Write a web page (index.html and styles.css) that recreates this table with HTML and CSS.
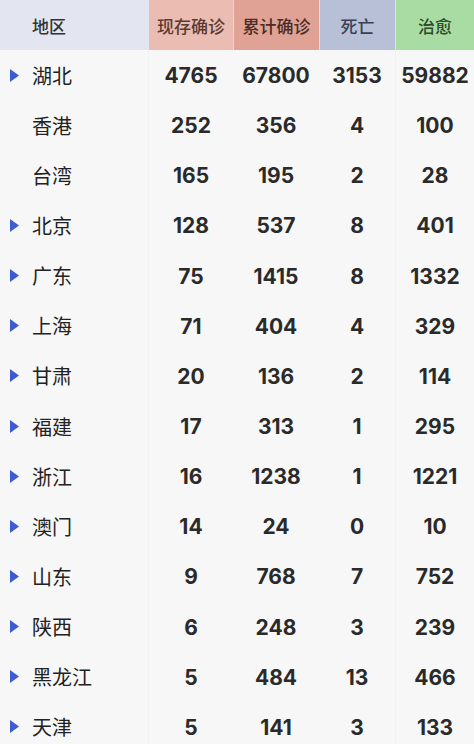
FILE: index.html
```html
<!DOCTYPE html>
<html lang="zh">
<head>
<meta charset="utf-8">
<title>疫情数据</title>
<link rel="stylesheet" href="styles.css">
</head>
<body>
<div class="table">
  <div class="row head">
    <div class="cell h-area">地区</div>
    <div class="cell h-now">现存确诊</div>
    <div class="cell h-total">累计确诊</div>
    <div class="cell h-dead">死亡</div>
    <div class="cell h-heal">治愈</div>
  </div>

  <div class="row"><div class="cell area"><span class="arrow"><svg viewBox="0 0 9 13" width="9" height="13"><path d="M0 0 L9 6.5 L0 13 Z"/></svg></span>湖北</div><div class="cell num">4765</div><div class="cell num">67800</div><div class="cell num c-dead">3153</div><div class="cell num c-heal">59882</div></div>
  <div class="row"><div class="cell area"><span class="arrow"></span>香港</div><div class="cell num">252</div><div class="cell num">356</div><div class="cell num c-dead">4</div><div class="cell num c-heal">100</div></div>
  <div class="row"><div class="cell area"><span class="arrow"></span>台湾</div><div class="cell num">165</div><div class="cell num">195</div><div class="cell num c-dead">2</div><div class="cell num c-heal">28</div></div>
  <div class="row"><div class="cell area"><span class="arrow"><svg viewBox="0 0 9 13" width="9" height="13"><path d="M0 0 L9 6.5 L0 13 Z"/></svg></span>北京</div><div class="cell num">128</div><div class="cell num">537</div><div class="cell num c-dead">8</div><div class="cell num c-heal">401</div></div>
  <div class="row"><div class="cell area"><span class="arrow"><svg viewBox="0 0 9 13" width="9" height="13"><path d="M0 0 L9 6.5 L0 13 Z"/></svg></span>广东</div><div class="cell num">75</div><div class="cell num">1415</div><div class="cell num c-dead">8</div><div class="cell num c-heal">1332</div></div>
  <div class="row"><div class="cell area"><span class="arrow"><svg viewBox="0 0 9 13" width="9" height="13"><path d="M0 0 L9 6.5 L0 13 Z"/></svg></span>上海</div><div class="cell num">71</div><div class="cell num">404</div><div class="cell num c-dead">4</div><div class="cell num c-heal">329</div></div>
  <div class="row"><div class="cell area"><span class="arrow"><svg viewBox="0 0 9 13" width="9" height="13"><path d="M0 0 L9 6.5 L0 13 Z"/></svg></span>甘肃</div><div class="cell num">20</div><div class="cell num">136</div><div class="cell num c-dead">2</div><div class="cell num c-heal">114</div></div>
  <div class="row"><div class="cell area"><span class="arrow"><svg viewBox="0 0 9 13" width="9" height="13"><path d="M0 0 L9 6.5 L0 13 Z"/></svg></span>福建</div><div class="cell num">17</div><div class="cell num">313</div><div class="cell num c-dead">1</div><div class="cell num c-heal">295</div></div>
  <div class="row"><div class="cell area"><span class="arrow"><svg viewBox="0 0 9 13" width="9" height="13"><path d="M0 0 L9 6.5 L0 13 Z"/></svg></span>浙江</div><div class="cell num">16</div><div class="cell num">1238</div><div class="cell num c-dead">1</div><div class="cell num c-heal">1221</div></div>
  <div class="row"><div class="cell area"><span class="arrow"><svg viewBox="0 0 9 13" width="9" height="13"><path d="M0 0 L9 6.5 L0 13 Z"/></svg></span>澳门</div><div class="cell num">14</div><div class="cell num">24</div><div class="cell num c-dead">0</div><div class="cell num c-heal">10</div></div>
  <div class="row"><div class="cell area"><span class="arrow"><svg viewBox="0 0 9 13" width="9" height="13"><path d="M0 0 L9 6.5 L0 13 Z"/></svg></span>山东</div><div class="cell num">9</div><div class="cell num">768</div><div class="cell num c-dead">7</div><div class="cell num c-heal">752</div></div>
  <div class="row"><div class="cell area"><span class="arrow"><svg viewBox="0 0 9 13" width="9" height="13"><path d="M0 0 L9 6.5 L0 13 Z"/></svg></span>陕西</div><div class="cell num">6</div><div class="cell num">248</div><div class="cell num c-dead">3</div><div class="cell num c-heal">239</div></div>
  <div class="row"><div class="cell area"><span class="arrow"><svg viewBox="0 0 9 13" width="9" height="13"><path d="M0 0 L9 6.5 L0 13 Z"/></svg></span>黑龙江</div><div class="cell num">5</div><div class="cell num">484</div><div class="cell num c-dead">13</div><div class="cell num c-heal">466</div></div>
  <div class="row"><div class="cell area"><span class="arrow"><svg viewBox="0 0 9 13" width="9" height="13"><path d="M0 0 L9 6.5 L0 13 Z"/></svg></span>天津</div><div class="cell num">5</div><div class="cell num">141</div><div class="cell num c-dead">3</div><div class="cell num c-heal">133</div></div>
</div>
</body>
</html>
```
FILE: styles.css
```css
html, body {
  margin: 0;
  padding: 0;
  background: #f7f7f7;
}
body {
  width: 474px;
  height: 744px;
  overflow: hidden;
  font-family: "Noto Sans CJK SC", "Noto Sans", sans-serif;
  color: #222;
}
.table {
  display: flex;
  flex-direction: column;
}
.row {
  display: grid;
  grid-template-columns: 149px 84px 86px 76px 79px;
  height: 50.15px;
}
.row.head {
  height: 50px;
}
.cell {
  display: flex;
  align-items: center;
  justify-content: center;
  box-sizing: border-box;
}
.head .cell {
  font-size: 17px;
  font-weight: 500;
}
.h-area {
  justify-content: flex-start;
  padding-left: 32px;
  background: #e3e6f1;
  color: #333;
}
.h-now {
  background: #ebbcb1;
  color: #5a3a33;
}
.h-total {
  background: #e0a294;
  color: #4a2c27;
  border-left: 1px solid #f2d4cc;
}
.h-dead {
  background: #b7c0d7;
  color: #384057;
  border-left: 1px solid #e6dcdc;
}
.h-heal {
  background: #a9dca2;
  color: #2b4a2a;
  border-left: 1px solid #d9e6dc;
}
.area {
  justify-content: flex-start;
  padding-left: 10px;
  font-size: 20px;
  color: #222;
  border-right: 1px solid #f2f2f2;
}
.arrow {
  display: flex;
  align-items: center;
  width: 22px;
  height: 13px;
}
.arrow svg {
  fill: #3d5cd3;
}
.num {
  font-family: Inter, "Liberation Sans", sans-serif;
  font-weight: 700;
  font-size: 21px;
  color: #2a2a2a;
  padding-top: 1px;
}
.c-heal {
  border-left: 1px solid #f1f1f1;
}
```
